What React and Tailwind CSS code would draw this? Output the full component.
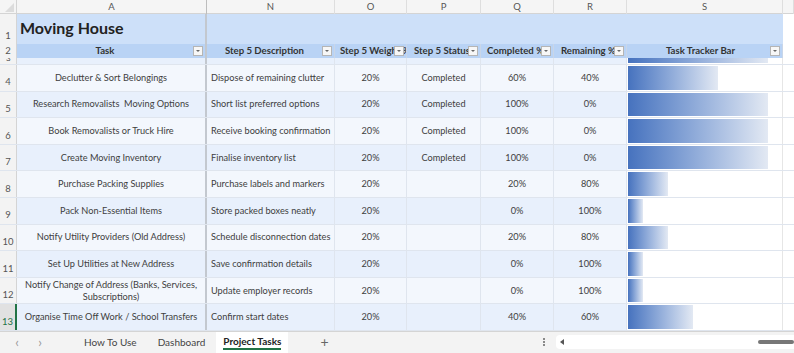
import React from 'react';

const COLS = 'grid grid-cols-[17px_190px_128px_72px_74px_73px_73px_156px_1fr]';

const rows = [
  { n: 4, task: 'Declutter & Sort Belongings', desc: 'Dispose of remaining clutter', w: '20%', status: 'Completed', done: 60 },
  { n: 5, task: 'Research Removalists  Moving Options', desc: 'Short list preferred options', w: '20%', status: 'Completed', done: 100 },
  { n: 6, task: 'Book Removalists or Truck Hire', desc: 'Receive booking confirmation', w: '20%', status: 'Completed', done: 100 },
  { n: 7, task: 'Create Moving Inventory', desc: 'Finalise inventory list', w: '20%', status: 'Completed', done: 100 },
  { n: 8, task: 'Purchase Packing Supplies', desc: 'Purchase labels and markers', w: '20%', status: '', done: 20 },
  { n: 9, task: 'Pack Non-Essential Items', desc: 'Store packed boxes neatly', w: '20%', status: '', done: 0 },
  { n: 10, task: 'Notify Utility Providers (Old Address)', desc: 'Schedule disconnection dates', w: '20%', status: '', done: 20 },
  { n: 11, task: 'Set Up Utilities at New Address', desc: 'Save confirmation details', w: '20%', status: '', done: 0 },
  { n: 12, task: 'Notify Change of Address (Banks, Services, Subscriptions)', desc: 'Update employer records', w: '20%', status: '', done: 0 },
  { n: 13, task: 'Organise Time Off Work / School Transfers', desc: 'Confirm start dates', w: '20%', status: '', done: 40 },
];

// excel data bar: minimum length plus share of the rest
const barWidth = (pct) => 15 + 1.25 * pct;

function Drop() {
  return (
    <span className="absolute right-[2px] top-[2px] w-[10px] h-[10px] bg-[#f7f7f7] border border-[#b5b5b5] flex items-center justify-center">
      <span className="block w-0 h-0 border-l-[2px] border-r-[2px] border-t-[2px] border-l-transparent border-r-transparent border-t-[#666]" />
    </span>
  );
}

function Head({ children, align = 'justify-center', pad = 'pr-3' }) {
  return (
    <div className={`relative flex items-center ${align} ${pad} overflow-hidden whitespace-nowrap border-r border-[#c9d6e8] font-bold text-[9.6px] text-[#333]`}>
      <span>{children}</span>
      <Drop />
    </div>
  );
}

export default function App() {
  return (
    <div className="w-[794px] h-[353px] overflow-hidden bg-white flex flex-col text-[#404040]" style={{ fontFamily: 'Lato, "Liberation Sans", sans-serif' }}>
      {/* column letters */}
      <div className={`${COLS} h-[14px] bg-[#f5f5f5] border-b border-[#d4d4d4] text-[9.5px] text-[#555]`}>
        <div className="relative border-r border-[#d4d4d4] overflow-hidden">
          <span className="absolute right-[2px] bottom-[2px] w-0 h-0" style={{ borderBottom: '9px solid #dcdcdc', borderLeft: '9px solid transparent' }} />
        </div>
        {['A', 'N', 'O', 'P', 'Q', 'R', 'S', ''].map((c, i) => (
          <div key={i} className={`flex items-center justify-center border-r ${i === 0 ? 'border-[#bdbdbd]' : 'border-[#dedede]'}`}>{c}</div>
        ))}
      </div>

      {/* title row */}
      <div className={`${COLS} h-[30px]`}>
        <div className="flex items-end justify-center pb-[1px] bg-[#f3f3f3] border-r border-[#d4d4d4] text-[9.5px] text-[#555]">1</div>
        <div className="flex items-end pb-[4px] pl-[3px] bg-[#cde0f9] border-r-2 border-[#c3c8cf] font-bold text-[16px] text-[#222]">Moving House</div>
        <div className="col-span-6 bg-[#cde0f9]" />
        <div className="bg-white" />
      </div>

      {/* header row */}
      <div className={`${COLS} h-[14px] border-b border-[#c9d6e8]`}>
        <div className="flex items-center justify-center bg-[#f3f3f3] border-r border-[#d4d4d4] text-[9.5px] text-[#555]">2</div>
        <div className="bg-[#b9d3f5] border-r-2 border-[#c3c8cf] relative flex items-center justify-center pr-3 font-bold text-[9.6px] text-[#333]">
          <span>Task</span>
          <Drop />
        </div>
        <div className="bg-[#b9d3f5] grid grid-cols-subgrid col-span-6">
          <Head>Step 5 Description</Head>
          <Head align="justify-start" pad="pl-[5px]">Step 5 Weight %</Head>
          <Head align="justify-start" pad="pl-[7px]">Step 5 Status</Head>
          <Head align="justify-start" pad="pl-[6px]">Completed %</Head>
          <Head align="justify-start" pad="pl-[7px]">Remaining %</Head>
          <Head pad="pr-2">Task Tracker Bar</Head>
        </div>
        <div className="bg-white" />
      </div>

      {/* partial row 3 */}
      <div className={`${COLS} h-[7px] border-b border-[#dfe5ee]`}>
        <div className="relative bg-[#f3f3f3] border-r border-[#d4d4d4] overflow-hidden">
          <span className="absolute left-[6px] top-[-4px] text-[8px] leading-none text-[#555]">3</span>
        </div>
        <div className="bg-[#e8f0fc] border-r-2 border-[#c3c8cf]" />
        <div className="bg-[#e8f0fc] border-r border-[#dfe5ee]" />
        <div className="bg-[#e8f0fc] border-r border-[#dfe5ee]" />
        <div className="bg-[#e8f0fc] border-r border-[#dfe5ee]" />
        <div className="bg-[#e8f0fc] border-r border-[#dfe5ee]" />
        <div className="bg-[#e8f0fc] border-r border-[#dfe5ee]" />
        <div className="bg-white border-r border-[#e6e6e6] pl-[1px]">
          <div className="h-[5px] bg-gradient-to-r from-[#4672be] to-[#e3e9f3]" style={{ width: barWidth(100) }} />
        </div>
        <div className="bg-white" />
      </div>

      {rows.map((r) => {
        const bg = r.n % 2 === 0 ? 'bg-[#f3f7fd]' : 'bg-[#e8f0fc]';
        const sel = r.n === 13;
        return (
          <div key={r.n} className={`${COLS} h-[26.6px] border-b border-[#dfe5ee] text-[9.2px]`}>
            <div className={`flex items-end justify-center pb-[1px] text-[9.5px] border-r ${sel ? 'bg-[#e1e1e1] text-[#217346] border-[#217346] border-r-2' : 'bg-[#f3f3f3] text-[#555] border-[#d4d4d4]'}`}>{r.n}</div>
            <div className={`${bg} border-r-2 border-[#c3c8cf] flex items-center justify-center text-center leading-[12px] px-[6px] whitespace-pre-wrap`}>{r.task}</div>
            <div className={`${bg} border-r border-[#dfe5ee] flex items-center pl-[4px] whitespace-nowrap overflow-hidden`}>{r.desc}</div>
            <div className={`${bg} border-r border-[#dfe5ee] flex items-center justify-center`}>{r.w}</div>
            <div className={`${bg} border-r border-[#dfe5ee] flex items-center justify-center`}>{r.status}</div>
            <div className={`${bg} border-r border-[#dfe5ee] flex items-center justify-center`}>{r.done}%</div>
            <div className={`${bg} border-r border-[#dfe5ee] flex items-center justify-center`}>{100 - r.done}%</div>
            <div className="bg-white border-r border-[#e6e6e6] flex items-center pl-[1px] py-[1px]">
              <div className="h-full bg-gradient-to-r from-[#4672be] to-[#e3e9f3]" style={{ width: barWidth(r.done) }} />
            </div>
            <div className="bg-white" />
          </div>
        );
      })}

      {/* sheet tabs */}
      <div className="flex-1 flex items-center bg-[#f3f3f3] border-t border-[#d4d4d4] text-[10px] text-[#444]">
        <span className="ml-[13px] w-[8px] text-center text-[#999] text-[13px] leading-none">‹</span>
        <span className="ml-[15px] w-[8px] text-center text-[#999] text-[13px] leading-none">›</span>
        <span className="ml-[40px]">How To Use</span>
        <span className="ml-[21px]">Dashboard</span>
        <span className="ml-[11px] h-full px-[7px] bg-white flex flex-col items-center justify-center font-bold text-[#222]">
          <span className="leading-[13px] border-b-2 border-[#217346]">Project Tasks</span>
        </span>
        <span className="ml-[32px] text-[14px] text-[#666] leading-none">+</span>
        <span className="ml-[214px] flex flex-col gap-[1px]">
          <span className="w-[2px] h-[2px] bg-[#666] rounded-full" />
          <span className="w-[2px] h-[2px] bg-[#666] rounded-full" />
          <span className="w-[2px] h-[2px] bg-[#666] rounded-full" />
        </span>
        <div className="ml-[11px] flex-1 h-[14px] bg-white rounded-l-sm flex items-center">
          <span className="ml-[4px] w-0 h-0 border-t-[3px] border-b-[3px] border-r-[4px] border-t-transparent border-b-transparent border-r-[#555]" />
          <span className="ml-auto w-[36px] h-[4px] bg-[#777] rounded-full" />
        </div>
      </div>
    </div>
  );
}
